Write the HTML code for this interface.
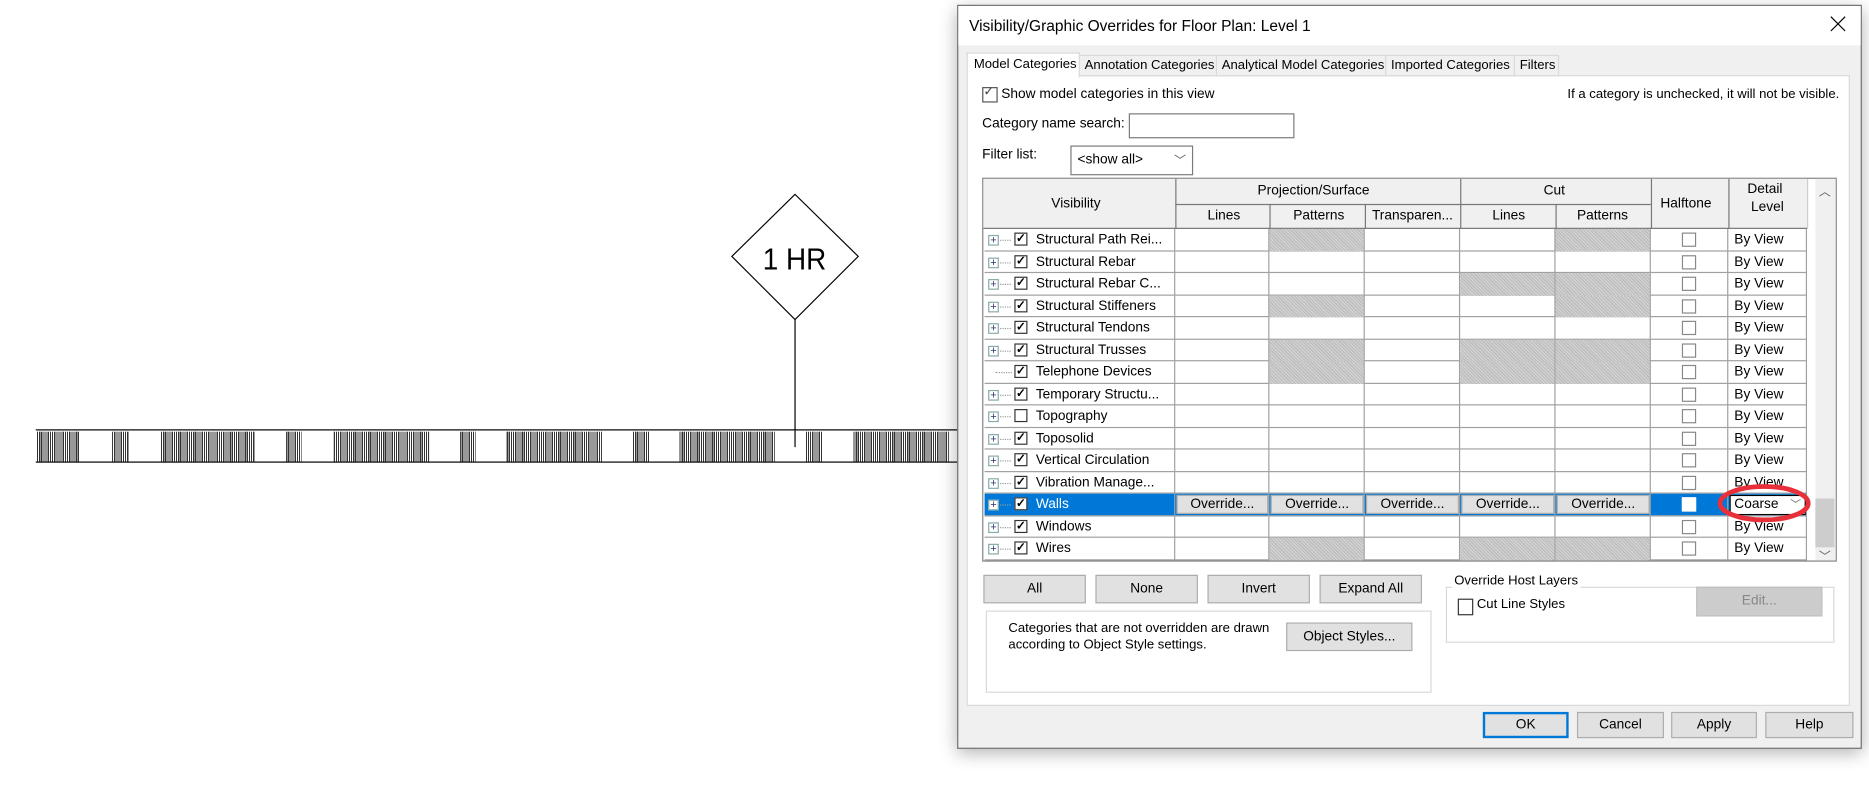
<!DOCTYPE html>
<html><head><meta charset="utf-8"><style>
*{box-sizing:border-box;margin:0;padding:0}
html,body{width:1869px;height:793px;overflow:hidden;background:#fff}
#w{position:absolute;left:0;top:0;width:1568px;height:665px;transform:scale(1.19196,1.19248);transform-origin:0 0;font-family:"Liberation Sans",sans-serif;font-size:11.5px;color:#000}
.a{position:absolute}
.h{background:repeating-linear-gradient(90deg,#333 0 1px,#fff 1px 1.8px)}
.btn{position:absolute;background:#e1e1e1;border:1px solid #adadad;text-align:center;font-size:11.5px}
.cb{position:absolute;width:11px;height:11px;border:1px solid #333;background:#fff}
.row{position:absolute;left:826px;width:690px;height:18.5px;border-bottom:1px solid #a0a0a0}
.c{position:absolute;top:0;height:18.5px;border-right:1px solid #a0a0a0}
.g{background:repeating-linear-gradient(45deg,#d2d2d2 0 1px,#bdbdbd 1px 2px)}
.t{position:absolute;top:2px;white-space:nowrap}
.ov{position:absolute;top:1px;height:16px;background:#e1e1e1;border:1px solid #adadad;text-align:center;line-height:14px}
</style></head><body><div id="w">
<div class="a" style="left:30px;top:360px;width:775px;height:28px;border-top:1.5px solid #000;border-bottom:1.5px solid #000"></div>
<div class="a h" style="left:31px;top:362px;width:36px;height:25px"></div>
<div class="a h" style="left:94px;top:362px;width:14px;height:25px"></div>
<div class="a h" style="left:135px;top:362px;width:79px;height:25px"></div>
<div class="a h" style="left:240px;top:362px;width:13px;height:25px"></div>
<div class="a h" style="left:280px;top:362px;width:80px;height:25px"></div>
<div class="a h" style="left:386px;top:362px;width:13px;height:25px"></div>
<div class="a h" style="left:425px;top:362px;width:80px;height:25px"></div>
<div class="a h" style="left:531px;top:362px;width:14px;height:25px"></div>
<div class="a h" style="left:570px;top:362px;width:80px;height:25px"></div>
<div class="a h" style="left:676px;top:362px;width:14px;height:25px"></div>
<div class="a h" style="left:716px;top:362px;width:80px;height:25px"></div>
<svg class="a" style="left:600px;top:150px" width="140" height="230"><polygon points="67,13 120,65 67,118 14,65" fill="#fff" stroke="#000" stroke-width="1"/><line x1="67" y1="118" x2="67" y2="225" stroke="#000"/><text x="67" y="76" font-family="Liberation Sans" font-size="26" text-anchor="middle" transform="scale(0.9,1) translate(7,0)">1 HR</text></svg>
<div class="a" style="left:803px;top:4px;width:759px;height:624px;background:#f0f0f0;border:1px solid #6e6e6e;box-shadow:0 4px 14px rgba(0,0,0,.3)"></div>
<div class="a" style="left:804px;top:5px;width:757px;height:33px;background:#fff"></div>
<div class="t" style="left:813px;top:14px;font-size:13px">Visibility/Graphic Overrides for Floor Plan: Level 1</div>
<svg class="a" style="left:1535px;top:13px" width="14" height="14"><path d="M1 1L13 13M13 1L1 13" stroke="#000" stroke-width="1"/></svg>
<div class="a" style="left:811px;top:63px;width:741px;height:529px;background:#fff;border:1px solid #d9d9d9"></div>
<div class="a" style="left:905px;top:46px;width:403px;height:18px;background:#f0f0f0;border:1px solid #d9d9d9"></div>
<div class="a" style="left:811px;top:44px;width:95px;height:21px;background:#fff;border:1px solid #d9d9d9;border-bottom:none"></div>
<div class="t" style="left:817px;top:48px;font-size:11px">Model Categories</div>
<div class="a" style="left:1020px;top:46px;width:1px;height:18px;background:#d9d9d9"></div>
<div class="a" style="left:1162px;top:46px;width:1px;height:18px;background:#d9d9d9"></div>
<div class="a" style="left:1270px;top:46px;width:1px;height:18px;background:#d9d9d9"></div>
<div class="t" style="left:910px;top:49px;font-size:11px">Annotation Categories</div>
<div class="t" style="left:1025px;top:49px;font-size:11px">Analytical Model Categories</div>
<div class="t" style="left:1167px;top:49px;font-size:11px">Imported Categories</div>
<div class="t" style="left:1275px;top:49px;font-size:11px">Filters</div>
<div class="cb" style="left:824px;top:73px;width:13px;height:13px;border-color:#555"></div>
<div class="t" style="left:825px;top:70px;font-size:11px;color:#444">✓</div>
<div class="t" style="left:840px;top:73px">Show model categories in this view</div>
<div class="t" style="left:1315px;top:73px;font-size:11px">If a category is unchecked, it will not be visible.</div>
<div class="t" style="left:824px;top:98px">Category name search:</div>
<div class="a" style="left:947px;top:95px;width:139px;height:21px;border:1px solid #7a7a7a;background:#fff"></div>
<div class="t" style="left:824px;top:124px">Filter list:</div>
<div class="a" style="left:898px;top:122px;width:103px;height:25px;border:1px solid #7a7a7a;background:#fff"></div>
<div class="t" style="left:904px;top:128px">&lt;show all&gt;</div>
<div class="t" style="left:985px;top:126px;font-size:10px;color:#555">﹀</div>
<div class="a" style="left:824px;top:149px;width:717px;height:322px;border:1px solid #828282;background:#fff"></div>
<div class="a" style="left:825px;top:150px;width:691px;height:42px;background:#f0f0f0;border-bottom:1px solid #777"></div>
<div class="a" style="left:986px;top:150px;width:1px;height:42px;background:#777"></div>
<div class="a" style="left:1225px;top:150px;width:1px;height:42px;background:#777"></div>
<div class="a" style="left:1385px;top:150px;width:1px;height:42px;background:#777"></div>
<div class="a" style="left:1450px;top:150px;width:1px;height:42px;background:#777"></div>
<div class="a" style="left:1516px;top:150px;width:1px;height:42px;background:#ccc"></div>
<div class="a" style="left:986px;top:171px;width:399px;height:1px;background:#777"></div>
<div class="a" style="left:1065px;top:171px;width:1px;height:21px;background:#777"></div>
<div class="a" style="left:1145px;top:171px;width:1px;height:21px;background:#777"></div>
<div class="a" style="left:1305px;top:171px;width:1px;height:21px;background:#777"></div>
<div class="t" style="left:882px;top:165px">Visibility</div>
<div class="t" style="left:1055px;top:154px">Projection/Surface</div>
<div class="t" style="left:1295px;top:154px">Cut</div>
<div class="t" style="left:1013px;top:175px">Lines</div>
<div class="t" style="left:1085px;top:175px">Patterns</div>
<div class="t" style="left:1151px;top:175px">Transparen...</div>
<div class="t" style="left:1252px;top:175px">Lines</div>
<div class="t" style="left:1323px;top:175px">Patterns</div>
<div class="t" style="left:1393px;top:165px">Halftone</div>
<div class="t" style="left:1466px;top:153px">Detail</div>
<div class="t" style="left:1469px;top:168px">Level</div>
<div class="a" style="left:1523px;top:150px;width:17px;height:320px;background:#f0f0f0"></div>
<div class="t" style="left:1526px;top:152px;font-size:10px;color:#555">︿</div>
<div class="a" style="left:1523px;top:418px;width:16px;height:41px;background:#cdcdcd"></div>
<div class="t" style="left:1526px;top:458px;font-size:10px;color:#555">﹀</div>
<div id="rows"></div>
<div class="btn" style="left:825px;top:482px;width:86px;height:24px;line-height:22px">All</div>
<div class="btn" style="left:919px;top:482px;width:86px;height:24px;line-height:22px">None</div>
<div class="btn" style="left:1013px;top:482px;width:86px;height:24px;line-height:22px">Invert</div>
<div class="btn" style="left:1107px;top:482px;width:86px;height:24px;line-height:22px">Expand All</div>
<div class="a" style="left:827px;top:512px;width:374px;height:69px;border:1px solid #d9d9d9"></div>
<div class="t" style="left:846px;top:521px;font-size:11px">Categories that are not overridden are drawn</div>
<div class="t" style="left:846px;top:535px;font-size:11px">according to Object Style settings.</div>
<div class="btn" style="left:1079px;top:522px;width:106px;height:24px;line-height:22px">Object Styles...</div>
<div class="a" style="left:1213px;top:492px;width:326px;height:47px;border:1px solid #d9d9d9"></div>
<div class="t" style="left:1218px;top:481px;background:#fff;padding:0 2px;font-size:11px">Override Host Layers</div>
<div class="cb" style="left:1223px;top:502px;width:13px;height:14px"></div>
<div class="t" style="left:1239px;top:501px;font-size:11px">Cut Line Styles</div>
<div class="btn" style="left:1423px;top:492px;width:106px;height:25px;line-height:23px;background:#ccc;border-color:#bfbfbf;color:#888">Edit...</div>
<div class="btn" style="left:1244px;top:597px;width:72px;height:22px;line-height:19px;border:2px solid #0078d7">OK</div>
<div class="btn" style="left:1323px;top:597px;width:73px;height:22px;line-height:20px">Cancel</div>
<div class="btn" style="left:1402px;top:597px;width:72px;height:22px;line-height:20px">Apply</div>
<div class="btn" style="left:1481px;top:597px;width:74px;height:22px;line-height:20px">Help</div>
</div>
<script>
(function(){
var names=["Structural Path Rei...","Structural Rebar","Structural Rebar C...","Structural Stiffeners","Structural Tendons","Structural Trusses","Telephone Devices","Temporary Structu...","Topography","Toposolid","Vertical Circulation","Vibration Manage...","Walls","Windows","Wires"];
var gray={0:[2,5],2:[4,5],3:[2,5],5:[2,4,5],6:[2,4,5],14:[2,4,5]};
var cx=[826,986,1065,1145,1225,1305,1385,1450,1516];
var h="";
for(var i=0;i<15;i++){
 var ty=192+i*18.5,sel=i==12;
 h+='<div class="row" style="top:'+ty+'px;'+(sel?'background:#0078d7;color:#fff':'')+'">';
 for(var j=0;j<8;j++){
  var g=(gray[i]||[]).indexOf(j)>=0;
  h+='<div class="c '+(g?'g':'')+'" style="left:'+(cx[j]-826)+'px;width:'+(cx[j+1]-cx[j])+'px"></div>';
 }
 if(i!=6) h+='<div style="position:absolute;left:3px;top:5px;width:9px;height:9px;border:1px solid #8aa;background:#fff;font-size:9px;line-height:7px;text-align:center;color:#336">+</div>';
 h+='<div style="position:absolute;left:'+(i==6?9:13)+'px;top:9px;width:'+(i==6?14:9)+'px;border-top:1px dotted #999"></div>';
 h+='<div style="position:absolute;left:25px;top:3px;width:11px;height:11px;border:1px solid #333;background:#fff;font-size:10px;line-height:9px;color:#000;text-align:center;font-weight:bold">'+(i==8?'':'✓')+'</div>';
 h+='<div class="t" style="left:43px;top:3px">'+names[i]+'</div>';
 h+='<div style="position:absolute;left:585px;top:3px;width:12px;height:12px;border:1px solid '+(sel?'#fff':'#888')+';background:#fff"></div>';
 if(sel){
  for(var k=0;k<5;k++) h+='<div class="ov" style="left:'+(cx[k+1]-826+1)+'px;width:'+(cx[k+2]-cx[k+1]-2)+'px;color:#000">Override...</div>';
  h+='<div style="position:absolute;left:625px;top:1px;width:64px;height:17px;background:#fff;border:1px solid #000;color:#000;padding-left:3px;line-height:15px">Coarse<span style="position:absolute;right:3px;top:0;font-size:9px;color:#666">﹀</span></div>';
 } else h+='<div class="t" style="left:629px;top:3px">By View</div>';
 h+='</div>';
}
h+='<svg style="position:absolute;left:1440px;top:405px" width="80" height="36"><ellipse cx="40" cy="17" rx="37" ry="14" fill="none" stroke="#e8303a" stroke-width="4"/></svg>';
document.getElementById("rows").outerHTML=h;
})();
</script>
</body></html>
